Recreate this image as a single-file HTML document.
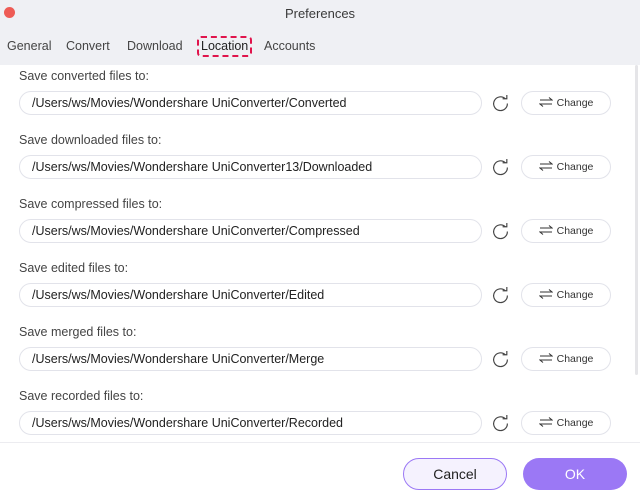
<!DOCTYPE html>
<html><head><style>
body{margin:0;width:640px;height:502px;overflow:hidden;background:#fff;font-family:"Liberation Sans",sans-serif;position:relative;color:#333}
.hdr{position:absolute;left:0;top:0;width:640px;height:65px;background:#eff0f4}
.dot{position:absolute;left:4px;top:7px;width:11px;height:11px;border-radius:50%;background:#ee5b55}
.title{position:absolute;top:6px;width:640px;text-align:center;font-size:13px;color:#3a3a3a}
.tabs{position:absolute;top:39px;left:7px;font-size:12.5px;color:#444}
.tabs span{position:absolute;white-space:nowrap}
.loc{border:2px dashed #e0144c;border-radius:4px;padding:0 2px;top:-3px;line-height:17px;color:#222}
.sb{position:absolute;left:635px;top:65px;width:3px;height:310px;background:#e5e5e8;border-radius:2px}
.lbl{position:absolute;left:19px;font-size:12.5px;color:#444}
.inp{position:absolute;left:19px;height:22px;border:1px solid #e2e3ea;border-radius:12px;font-size:12.5px;line-height:22px;padding-left:12px;width:449px;color:#222}
.rf{position:absolute;left:491px;width:19px;height:19px}
.ch{position:absolute;left:521px;width:88px;height:22px;border:1px solid #e2e3ea;border-radius:12px;font-size:10.5px;line-height:22px;text-align:center;color:#333}
.sep{position:absolute;left:0;top:442px;width:640px;height:1px;background:#ececf0}
.btn{position:absolute;top:458px;width:104px;height:32px;border-radius:16px;box-sizing:border-box;text-align:center;line-height:30px;font-size:14px}
</style></head><body>
<div class="hdr"></div>
<div class="dot"></div>
<div class="title">Preferences</div>
<div class="tabs">
<span style="left:0">General</span><span style="left:59px">Convert</span><span style="left:120px">Download</span><span class="loc" style="left:190px">Location</span><span style="left:257px">Accounts</span>
</div>
<div class="sb"></div>
<div id="rows"></div>
<script>
var d=[["Save converted files to:","/Users/ws/Movies/Wondershare UniConverter/Converted"],["Save downloaded files to:","/Users/ws/Movies/Wondershare UniConverter13/Downloaded"],["Save compressed files to:","/Users/ws/Movies/Wondershare UniConverter/Compressed"],["Save edited files to:","/Users/ws/Movies/Wondershare UniConverter/Edited"],["Save merged files to:","/Users/ws/Movies/Wondershare UniConverter/Merge"],["Save recorded files to:","/Users/ws/Movies/Wondershare UniConverter/Recorded"]];
var h="";
d.forEach(function(r,i){var y=i*64+1;
h+='<div class="lbl" style="top:'+(68+y)+'px">'+r[0]+'</div>';
h+='<div class="inp" style="top:'+(90+y)+'px">'+r[1]+'</div>';
h+='<svg class="rf" style="top:'+(93+y)+'px" viewBox="0 0 18 18" fill="none" stroke="#444" stroke-width="1.1"><path d="M13.5 4.5A6.5 6.5 0 1 0 15.5 9"/><path d="M11 4.5h4V1"/></svg>';
h+='<div class="ch" style="top:'+(90+y)+'px"><svg width="14" height="10" viewBox="0 0 14 10" fill="none" stroke="#333" stroke-width="1" style="vertical-align:-1px;margin-right:4px"><path d="M1 3h12L10 0.5M13 7H1l3 2.5"/></svg>Change</div>';
});
document.getElementById("rows").innerHTML=h;
</script>
<div class="sep"></div>
<div class="btn" style="left:403px;border:1px solid #9b78f5;background:#f5f2fe;color:#222">Cancel</div>
<div class="btn" style="left:523px;background:#9b78f5;color:#fff;line-height:32px">OK</div>
</body></html>
